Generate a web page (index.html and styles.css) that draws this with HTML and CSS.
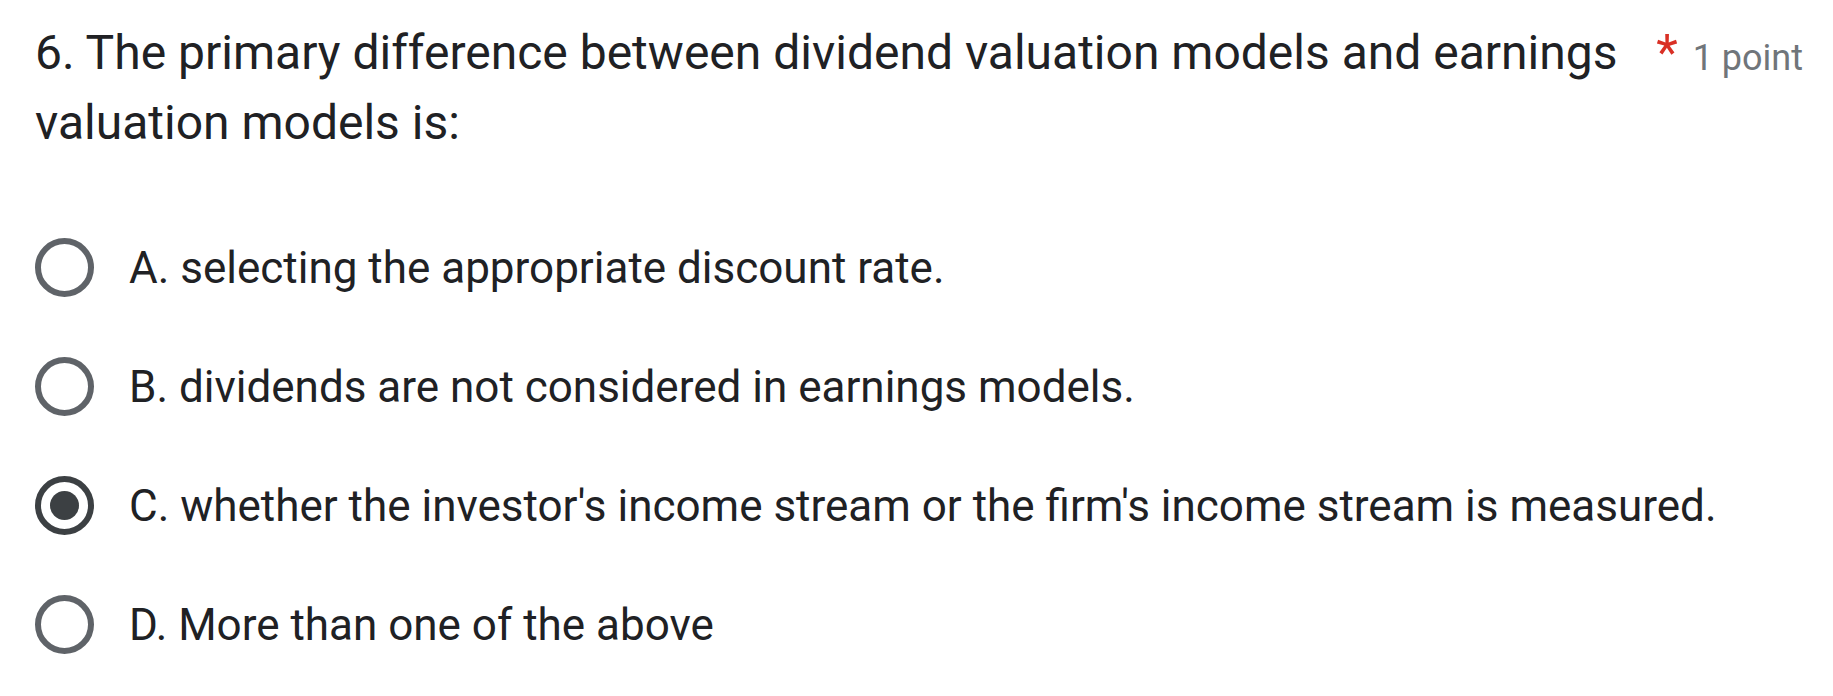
FILE: index.html
```html
<!DOCTYPE html>
<html>
<head>
<meta charset="utf-8">
<link rel="stylesheet" href="styles.css">
</head>
<body>
<div class="question">
  <div class="header">
    <div class="title">6. The primary difference between dividend valuation models and earnings valuation models is:</div>
    <div class="meta"><span class="req">*</span><span class="points">1 point</span></div>
  </div>
  <div class="options">
    <div class="option"><span class="radio"></span><span class="label">A. selecting the appropriate discount rate.</span></div>
    <div class="option"><span class="radio"></span><span class="label">B. dividends are not considered in earnings models.</span></div>
    <div class="option"><span class="radio checked"></span><span class="label">C. whether the investor's income stream or the firm's income stream is measured.</span></div>
    <div class="option"><span class="radio"></span><span class="label">D. More than one of the above</span></div>
  </div>
</div>
</body>
</html>
```

FILE: styles.css
```css
html, body {
  margin: 0;
  padding: 0;
  background: #ffffff;
}
body {
  font-family: Roboto, "Liberation Sans", Arial, sans-serif;
  color: #202124;
}
.question {
  padding: 18px 30px 0 35px;
}
.header {
  display: flex;
  align-items: flex-start;
}
.title {
  flex: 1;
  font-size: 48px;
  line-height: 70px;
  padding-right: 20px;
}
.meta {
  display: flex;
  align-items: baseline;
  line-height: 70px;
  white-space: nowrap;
}
.req {
  color: #d93025;
  font-size: 50px;
  margin-right: 15px;
}
.points {
  color: #70757a;
  font-size: 36px;
}
.options {
  margin-top: 50px;
  display: flex;
  flex-direction: column;
}
.option {
  display: flex;
  align-items: center;
  height: 119px;
}
.radio {
  box-sizing: border-box;
  width: 59px;
  height: 59px;
  border: 6px solid #5f6368;
  border-radius: 50%;
  flex-shrink: 0;
  display: flex;
  align-items: center;
  justify-content: center;
  margin-right: 35px;
}
.radio.checked {
  border-color: #3c4043;
}
.radio.checked::after {
  content: "";
  width: 29px;
  height: 29px;
  border-radius: 50%;
  background: #3c4043;
}
.label {
  font-size: 44px;
  line-height: 60px;
}
```
